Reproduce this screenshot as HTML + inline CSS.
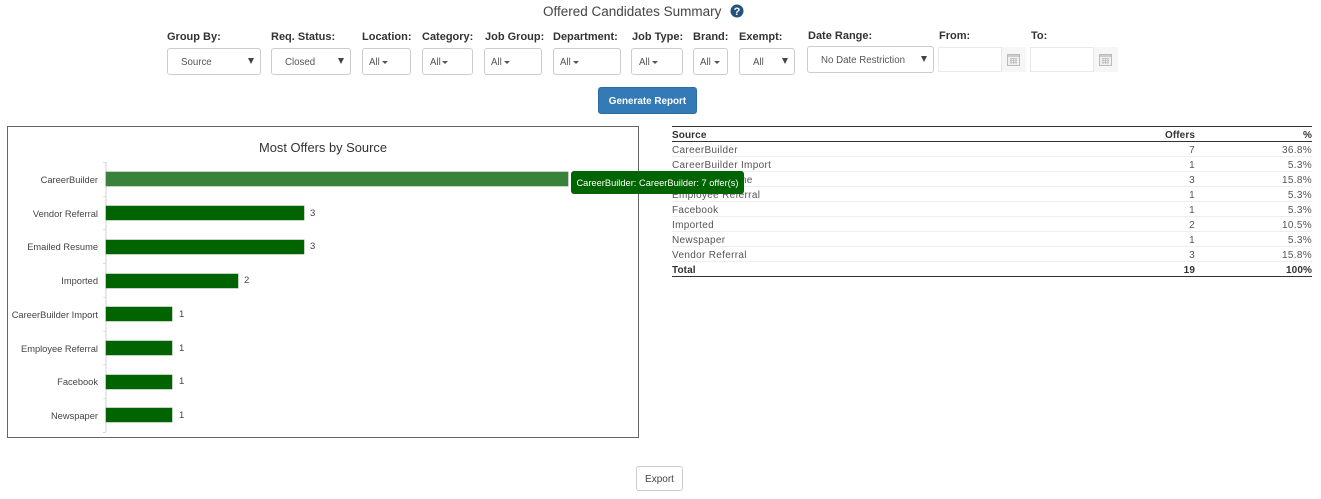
<!DOCTYPE html>
<html><head><meta charset="utf-8"><style>
html,body{margin:0;padding:0;background:#fff;width:1321px;height:499px;overflow:hidden;font-family:"Liberation Sans",sans-serif}
.a{position:absolute;white-space:nowrap}
.l{position:absolute;white-space:nowrap;font-size:11px;font-weight:700;color:#333;line-height:14px}
.c{position:absolute;box-sizing:border-box;border:1px solid #ccc;border-radius:3px;background:#fff;height:27px;top:48px;font-size:9.7px;color:#555;line-height:27px}
.c i{position:absolute;font-style:normal;white-space:nowrap}
.car{position:absolute;width:0;height:0;border-left:3px solid transparent;border-right:3px solid transparent;border-top:3px solid #555;top:12px}
.tri{position:absolute;width:0;height:0;border-left:3px solid transparent;border-right:3px solid transparent;border-top:6px solid #444;top:9px}
.bar{position:absolute;left:106px;height:14px;background:#006400;box-shadow:0 0 0 .5px #8aa98a}
.bl{position:absolute;right:1223px;font-size:9.3px;color:#444;line-height:12px;white-space:nowrap}
.v{position:absolute;font-size:9.5px;color:#444;line-height:12px}
.tk{position:absolute;left:103px;width:3px;height:1px;background:#ddd}
.r{position:absolute;left:672px;width:640px;height:15px;font-size:10px;color:#555;line-height:15px;letter-spacing:.32px}
.r b{color:#333;letter-spacing:.1px}
.r span{position:absolute;top:1px;white-space:nowrap}
.r .s{left:0}.r .o{right:117px}.r .p{right:0}
.ln{position:absolute;left:672px;width:640px;height:1px;background:#eee}
.cal{position:absolute;width:24px;height:25px;top:47px;background:#f6f6f6}
.inp{position:absolute;top:47px;width:64px;height:25px;box-sizing:border-box;border:1px solid #e9e9e9;background:#fff}
</style></head><body>

<div class="a" style="left:543px;top:4px;font-size:13.5px;line-height:16px;color:#444">Offered Candidates Summary</div>
<svg class="a" style="left:730px;top:4px" width="14" height="14" viewBox="0 0 14 14"><circle cx="7" cy="7" r="6.5" fill="#23527c"/><text x="7" y="10.8" text-anchor="middle" font-family="Liberation Sans" font-weight="700" font-size="11" fill="#fff">?</text></svg>

<div class="l" style="left:167px;top:30px">Group By:</div>
<div class="l" style="left:271px;top:30px">Req. Status:</div>
<div class="l" style="left:362px;top:30px">Location:</div>
<div class="l" style="left:422px;top:30px">Category:</div>
<div class="l" style="left:485px;top:30px">Job Group:</div>
<div class="l" style="left:553px;top:30px">Department:</div>
<div class="l" style="left:632px;top:30px">Job Type:</div>
<div class="l" style="left:693px;top:30px">Brand:</div>
<div class="l" style="left:739px;top:30px">Exempt:</div>
<div class="l" style="left:808px;top:29px">Date Range:</div>
<div class="l" style="left:939px;top:29px">From:</div>
<div class="l" style="left:1031px;top:29px">To:</div>

<div class="c" style="left:167px;width:94px"><i style="left:13px">Source</i><b class="tri" style="left:80px"></b></div>
<div class="c" style="left:271px;width:80px"><i style="left:13px">Closed</i><b class="tri" style="left:66px"></b></div>
<div class="c" style="left:362px;width:49px"><i style="left:6px">All</i><b class="car" style="left:19px"></b></div>
<div class="c" style="left:422px;width:51px"><i style="left:7px">All</i><b class="car" style="left:19px"></b></div>
<div class="c" style="left:484px;width:58px"><i style="left:6px">All</i><b class="car" style="left:19px"></b></div>
<div class="c" style="left:553px;width:68px"><i style="left:6px">All</i><b class="car" style="left:19px"></b></div>
<div class="c" style="left:631px;width:52px"><i style="left:7px">All</i><b class="car" style="left:20px"></b></div>
<div class="c" style="left:693px;width:35px"><i style="left:6px">All</i><b class="car" style="left:20px"></b></div>
<div class="c" style="left:739px;width:56px"><i style="left:13px">All</i><b class="tri" style="left:42px"></b></div>
<div class="c" style="left:807px;width:127px;top:46px"><i style="left:13px">No Date Restriction</i><b class="tri" style="left:113px"></b></div>

<div class="inp" style="left:938px"></div>
<div class="cal" style="left:1002px"></div>
<svg class="a" style="left:1007px;top:53px" width="13" height="13" viewBox="0 0 13 13"><rect x=".5" y="1.5" width="12" height="11" fill="#f0f0f0" stroke="#bbb"/><rect x="1" y="2" width="11" height="2" fill="#ccc"/><path d="M3 5.5h7M3 7.5h7M3 9.5h7M4 5v6M6.5 5v6M9 5v6" stroke="#bbb" stroke-width=".8"/></svg>
<div class="inp" style="left:1030px"></div>
<div class="cal" style="left:1094px"></div>
<svg class="a" style="left:1099px;top:53px" width="13" height="13" viewBox="0 0 13 13"><rect x=".5" y="1.5" width="12" height="11" fill="#f0f0f0" stroke="#bbb"/><rect x="1" y="2" width="11" height="2" fill="#ccc"/><path d="M3 5.5h7M3 7.5h7M3 9.5h7M4 5v6M6.5 5v6M9 5v6" stroke="#bbb" stroke-width=".8"/></svg>

<div class="a" style="left:598px;top:87px;width:99px;height:27px;box-sizing:border-box;background:#337ab7;border:1px solid #2e6da4;border-radius:3px;color:#fff;font-size:9.9px;font-weight:700;line-height:27px;text-align:center">Generate Report</div>

<div class="a" style="left:7px;top:126px;width:632px;height:312px;box-sizing:border-box;border:1px solid #666"></div>
<div class="a" style="left:7px;width:632px;top:140px;text-align:center;font-size:12.9px;line-height:16px;color:#333">Most Offers by Source</div>

<div class="a" style="left:105px;top:162px;width:2px;height:270px;background:#e8e8e8"></div>
<div class="tk" style="top:162px"></div><div class="tk" style="top:196px"></div><div class="tk" style="top:229px"></div><div class="tk" style="top:263px"></div><div class="tk" style="top:297px"></div><div class="tk" style="top:331px"></div><div class="tk" style="top:364px"></div><div class="tk" style="top:398px"></div><div class="tk" style="top:432px"></div>

<div class="bar" style="top:172px;width:462px;background:#38823a"></div>
<div class="bar" style="top:206px;width:198px"></div>
<div class="bar" style="top:240px;width:198px"></div>
<div class="bar" style="top:274px;width:132px"></div>
<div class="bar" style="top:307px;width:66px"></div>
<div class="bar" style="top:341px;width:66px"></div>
<div class="bar" style="top:375px;width:66px"></div>
<div class="bar" style="top:408px;width:66px"></div>

<div class="bl" style="top:174px">CareerBuilder</div>
<div class="bl" style="top:208px">Vendor Referral</div>
<div class="bl" style="top:241px">Emailed Resume</div>
<div class="bl" style="top:275px">Imported</div>
<div class="bl" style="top:309px">CareerBuilder Import</div>
<div class="bl" style="top:343px">Employee Referral</div>
<div class="bl" style="top:376px">Facebook</div>
<div class="bl" style="top:410px">Newspaper</div>

<div class="v" style="left:310px;top:208px">3</div>
<div class="v" style="left:310px;top:241px">3</div>
<div class="v" style="left:244px;top:275px">2</div>
<div class="v" style="left:179px;top:309px">1</div>
<div class="v" style="left:179px;top:343px">1</div>
<div class="v" style="left:179px;top:376px">1</div>
<div class="v" style="left:179px;top:410px">1</div>

<div class="a" style="left:672px;top:126px;width:640px;height:1px;background:#333"></div>
<div class="a" style="left:672px;top:141px;width:640px;height:1px;background:#333"></div>
<div class="r" style="top:127px"><span class="s"><b>Source</b></span><span class="o"><b>Offers</b></span><span class="p"><b>%</b></span></div>
<div class="r" style="top:142px"><span class="s">CareerBuilder</span><span class="o">7</span><span class="p">36.8%</span></div>
<div class="ln" style="top:156px"></div>
<div class="r" style="top:157px"><span class="s">CareerBuilder Import</span><span class="o">1</span><span class="p">5.3%</span></div>
<div class="ln" style="top:171px"></div>
<div class="r" style="top:172px"><span class="s">Emailed Resume</span><span class="o">3</span><span class="p">15.8%</span></div>
<div class="ln" style="top:186px"></div>
<div class="r" style="top:187px"><span class="s">Employee Referral</span><span class="o">1</span><span class="p">5.3%</span></div>
<div class="ln" style="top:201px"></div>
<div class="r" style="top:202px"><span class="s">Facebook</span><span class="o">1</span><span class="p">5.3%</span></div>
<div class="ln" style="top:216px"></div>
<div class="r" style="top:217px"><span class="s">Imported</span><span class="o">2</span><span class="p">10.5%</span></div>
<div class="ln" style="top:231px"></div>
<div class="r" style="top:232px"><span class="s">Newspaper</span><span class="o">1</span><span class="p">5.3%</span></div>
<div class="ln" style="top:246px"></div>
<div class="r" style="top:247px"><span class="s">Vendor Referral</span><span class="o">3</span><span class="p">15.8%</span></div>
<div class="ln" style="top:261px"></div>
<div class="r" style="top:262px"><span class="s"><b>Total</b></span><span class="o"><b>19</b></span><span class="p"><b>100%</b></span></div>
<div class="a" style="left:672px;top:276px;width:640px;height:1px;background:#333"></div>

<div class="a" style="left:571px;top:171px;width:173px;height:23px;background:#006400;border-radius:3px;color:#fff;font-size:9.3px;line-height:25px;text-align:center">CareerBuilder: CareerBuilder: 7 offer(s)</div>

<div class="a" style="left:636px;top:466px;width:47px;height:25px;box-sizing:border-box;border:1px solid #ccc;border-radius:3px;color:#444;font-size:10px;line-height:25px;text-align:center">Export</div>

</body></html>
